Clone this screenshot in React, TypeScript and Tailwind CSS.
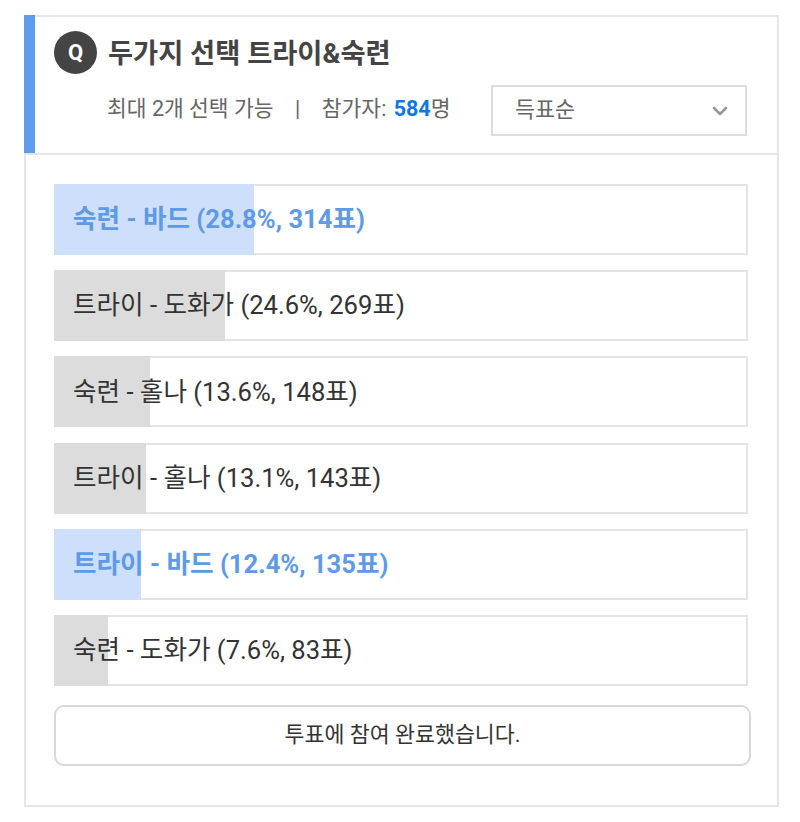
import { ChevronDown } from "lucide-react";

type PollOption = {
  label: string;
  percent: number;
  votes: number;
  fill: number;
  selected?: boolean;
};

const options: ReadonlyArray<PollOption> = [
  { label: "숙련 - 바드", percent: 28.8, votes: 314, fill: 200, selected: true },
  { label: "트라이 - 도화가", percent: 24.6, votes: 269, fill: 171 },
  { label: "숙련 - 홀나", percent: 13.6, votes: 148, fill: 96 },
  { label: "트라이 - 홀나", percent: 13.1, votes: 143, fill: 92 },
  { label: "트라이 - 바드", percent: 12.4, votes: 135, fill: 87, selected: true },
  { label: "숙련 - 도화가", percent: 7.6, votes: 83, fill: 54 },
];

export default function App() {
  return (
    <div className="h-[822px] w-[800px] bg-white pl-6 pt-[15px] font-['Roboto','Noto_Sans_CJK_KR',sans-serif] text-[#333]">
      <div className="h-[792px] w-[755px] border-2 border-[#e6e6e6]">
        <header className="-ml-0.5 -mt-0.5 flex h-[140px] border-b-2 border-[#e6e6e6]">
          <div className="w-[11px] shrink-0 bg-[#5f9cec]" />
          <div className="flex-1 pl-[19px]">
            <div className="mt-4 flex items-center gap-[11px]">
              <span className="flex h-[43px] w-[43px] items-center justify-center rounded-full bg-[#444] text-[22px] font-bold text-white">
                Q
              </span>
              <h1 className="pt-1 text-[27.3px] font-bold leading-[39px] text-[#444]">
                두가지 선택 트라이&숙련
              </h1>
            </div>
            <div className="mt-[11px] flex items-start">
              <p className="ml-[53px] mt-[9px] w-[384px] whitespace-nowrap text-[21.5px] leading-[30px] text-[#666]">
                최대 2개 선택 가능
                <span className="mx-[21.5px]">|</span>
                참가자: <b className="ml-0.5 text-[#0b7ae0]">584</b>명
              </p>
              <div className="flex h-[51px] w-[256px] items-center justify-between border-2 border-[#ddd] pl-[22px] pr-[13px] text-[21.8px] text-[#666]">
                득표순
                <ChevronDown className="h-6 w-6 text-[#999]" strokeWidth={2.5} />
              </div>
            </div>
          </div>
        </header>
        <div className="flex flex-col gap-[15.2px] pl-7 pt-[29px]">
          {options.map((option) => (
            <PollRow key={option.label} option={option} />
          ))}
          <div className="mt-[3.5px] flex h-[61px] w-[697px] items-center justify-center rounded-[10px] border-2 border-[#d8d8d8] text-[21.7px] text-[#333]">
            투표에 참여 완료했습니다.
          </div>
        </div>
      </div>
    </div>
  );
}

function PollRow({ option }: { option: PollOption }) {
  const { label, percent, votes, fill, selected } = option;
  return (
    <div className="relative flex h-[71px] w-[694px] items-center border-2 border-[#e4e4e4] pl-[17px] text-[25.6px]">
      <div
        className={
          selected
            ? "absolute -bottom-0.5 -left-0.5 -top-0.5 bg-[#cddffa]"
            : "absolute -bottom-0.5 -left-0.5 -top-0.5 bg-[#dcdcdc]"
        }
        style={{ width: `${fill}px` }}
      />
      <span
        className={
          selected
            ? "relative font-bold text-[#5f9ae6]"
            : "relative text-[#333]"
        }
      >
        {label} ({percent}%, {votes}표)
      </span>
    </div>
  );
}
